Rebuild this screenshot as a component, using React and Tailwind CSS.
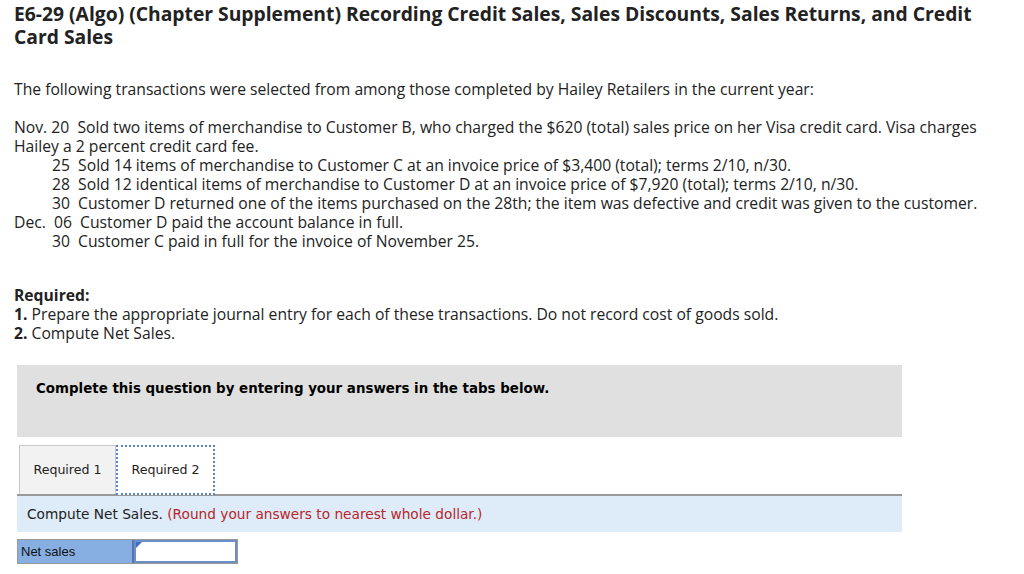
import React from 'react';

const body = { fontFamily: '"Open Sans", "Liberation Sans", sans-serif' };

const transactions = [
  { month: 'Nov.', day: '20', text: 'Sold two items of merchandise to Customer B, who charged the $620 (total) sales price on her Visa credit card. Visa charges Hailey a 2 percent credit card fee.' },
  { month: '', day: '25', text: 'Sold 14 items of merchandise to Customer C at an invoice price of $3,400 (total); terms 2/10, n/30.' },
  { month: '', day: '28', text: 'Sold 12 identical items of merchandise to Customer D at an invoice price of $7,920 (total); terms 2/10, n/30.' },
  { month: '', day: '30', text: 'Customer D returned one of the items purchased on the 28th; the item was defective and credit was given to the customer.' },
  { month: 'Dec.', day: '06', text: 'Customer D paid the account balance in full.' },
  { month: '', day: '30', text: 'Customer C paid in full for the invoice of November 25.' },
];

const App = () => {
  return (
    <div className="bg-white text-[#222] w-[1024px] h-[574px] overflow-hidden" style={body}>
      <div className="pl-[14px] pr-[26px]">
        <h1 className="pt-[2px] text-[19.3px] leading-[23px] font-bold text-[#222]">
          E6-29 (Algo) (Chapter Supplement) Recording Credit Sales, Sales Discounts, Sales Returns, and Credit Card Sales
        </h1>

        <p className="mt-[32px] text-[15.7px] leading-[19px]">
          The following transactions were selected from among those completed by Hailey Retailers in the current year:
        </p>

        <div className="mt-[19px] text-[15.7px] leading-[19px]">
          {transactions.map((t, idx) => (
            <p key={idx}>
              {t.month === 'Nov.' && <span>Nov. {t.day}&nbsp; </span>}
              {t.month === 'Dec.' && <span>Dec.&nbsp; {t.day}&nbsp; </span>}
              {!t.month && <span className="pl-[38px]">{t.day}&nbsp; </span>}
              {t.text}
            </p>
          ))}
        </div>

        <div className="mt-[35px] text-[15.7px] leading-[19px]">
          <p className="font-bold">Required:</p>
          <p><span className="font-bold">1.</span> Prepare the appropriate journal entry for each of these transactions. Do not record cost of goods sold.</p>
          <p><span className="font-bold">2.</span> Compute Net Sales.</p>
        </div>
      </div>

      <div className="ml-[17px] w-[885px]" style={{ fontFamily: '"DejaVu Sans", Verdana, sans-serif' }}>
        <div className="mt-[22px] h-[72px] bg-[#e0e0e0] pl-[19px] pt-[14px]">
          <p className="text-[13.4px] font-bold text-black">Complete this question by entering your answers in the tabs below.</p>
        </div>

        <div className="mt-[8px] flex items-end h-[49px] pl-[2px]">
          <div className="h-[49px] w-[97px] bg-[#f2f2f2] border border-[#c8c8c8] border-b-0 flex items-center justify-center text-[12.6px] text-[#222]">
            Required 1
          </div>
          <div className="h-[50px] w-[99px] bg-white border-2 border-dotted border-[#5a85c6] flex items-center justify-center text-[12.6px] text-[#222] -mb-[1px]">
            Required 2
          </div>
        </div>

        <div className="border-t-2 border-[#9a9a9a] bg-[#deebf8] h-[38px] pl-[10px] flex items-center text-[13.7px]">
          <span className="text-[#222]">Compute Net Sales.&nbsp;</span>
          <span className="text-[#b8262a]">(Round your answers to nearest whole dollar.)</span>
        </div>

        <div className="mt-[7px] flex w-[221px] h-[25px] border border-[#999]" style={{ fontFamily: '"Liberation Sans", Arial, sans-serif' }}>
          <div className="w-[116px] bg-[#86aee0] border-r-2 border-[#5477b0] text-[13px] leading-[23px] pl-[3px] text-[#111]">
            Net sales
          </div>
          <div className="relative flex-1 bg-white border-2 border-[#6b8fc7]">
            <span className="absolute left-0 top-0 w-0 h-0 border-t-[6px] border-r-[6px] border-t-[#3f6fc0] border-r-transparent" />
          </div>
        </div>
      </div>
    </div>
  );
};

export default App;
